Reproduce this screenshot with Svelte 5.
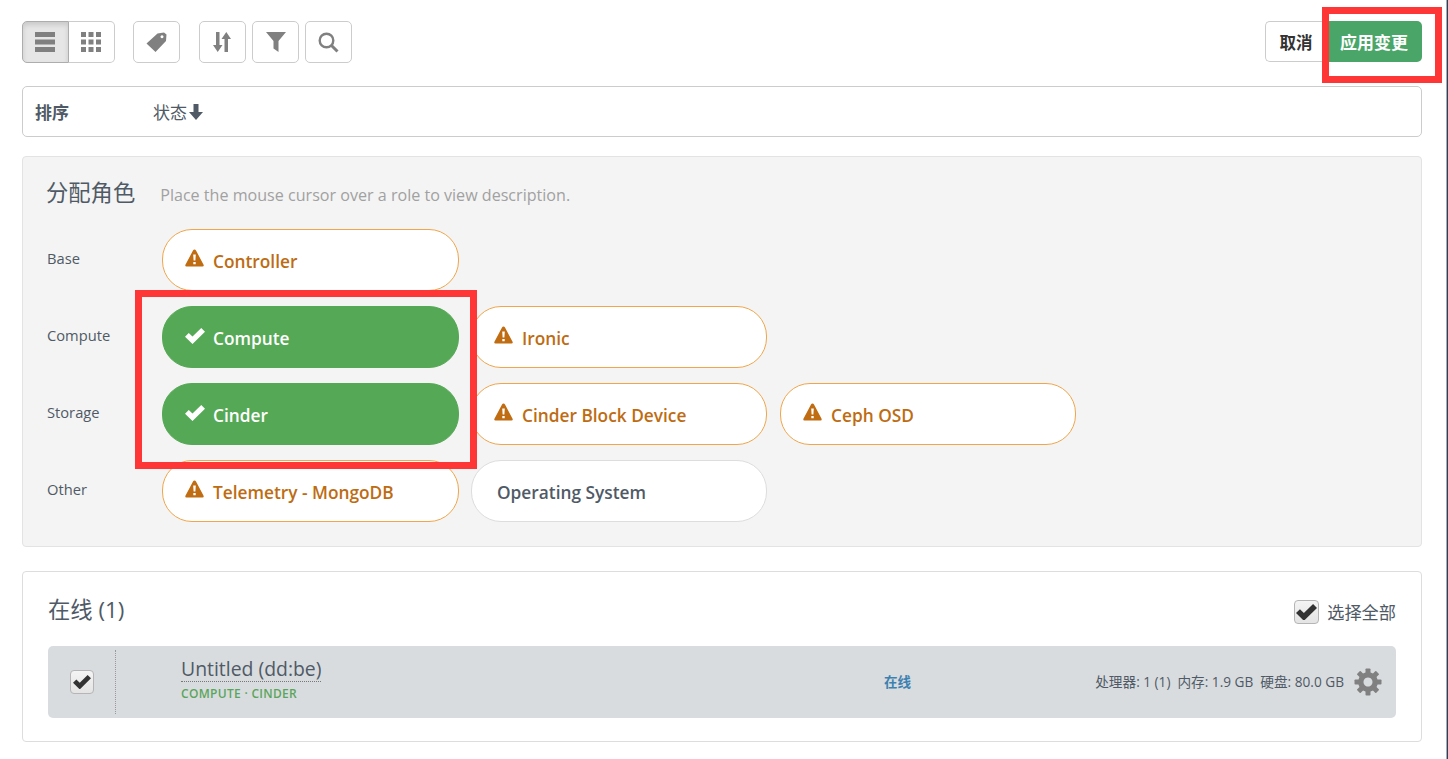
<script>
  const roleRows = [
    { label: 'Base', roles: [{ name: 'Controller', state: 'warn' }] },
    { label: 'Compute', roles: [{ name: 'Compute', state: 'on' }, { name: 'Ironic', state: 'warn' }] },
    { label: 'Storage', roles: [{ name: 'Cinder', state: 'on' }, { name: 'Cinder Block Device', state: 'warn' }, { name: 'Ceph OSD', state: 'warn' }] },
    { label: 'Other', roles: [{ name: 'Telemetry - MongoDB', state: 'warn' }, { name: 'Operating System', state: 'plain' }] }
  ];
</script>

{#snippet check(width)}
  <svg {width} height={width * 0.8} viewBox="2 3.600 16 12.800"><path d="M2 10.500 L5 7.600 L8 10.400 L15 3.600 L18 6.600 L8 16.400 Z" fill="currentColor" /></svg>
{/snippet}

<div class="page">
  <header class="toolbar">
    <div class="tools">
      <div class="group">
        <button class="tool shifted active" aria-label="list">
          <svg width="20" height="20" viewBox="0 0 20 20"><path d="M0 0h20v5H0zM0 7.500h20v5H0zM0 15h20v5H0z" fill="#808080" /></svg>
        </button>
        <button class="tool shifted" aria-label="grid">
          <svg width="20" height="20" viewBox="0 0 20 20"><path d="M0 0h5v5H0zM7.500 0h5v5h-5zM15 0h5v5h-5zM0 7.500h5v5H0zM7.500 7.500h5v5h-5zM15 7.500h5v5h-5zM0 15h5v5H0zM7.500 15h5v5h-5zM15 15h5v5h-5z" fill="#808080" /></svg>
        </button>
      </div>
      <button class="tool solo tag" aria-label="labels">
        <svg width="21" height="21" viewBox="0 0 21 21"><path fill-rule="evenodd" d="M0.500 11.500 L11.500 1.500 L18 0.500 L20.500 2.500 L20 9 L9.500 20 Z M16 3.200 a1.500 1.500 0 1 0 0.010 0 Z" fill="#808080" /></svg>
      </button>
      <button class="tool shifted solo" aria-label="sort">
        <svg width="18" height="20" viewBox="0 0 18 20"><path d="M3 0h3.500v13H9.500L4.700 20 0 13h3zM11.500 20V7H8.500L13.300 0 18 7h-3v13z" fill="#808080" /></svg>
      </button>
      <button class="tool solo" aria-label="filter">
        <svg width="20" height="20" viewBox="0 0 20 20"><path d="M0 0h20L12.500 9v11l-5-3.500V9z" fill="#808080" /></svg>
      </button>
      <button class="tool solo" aria-label="search">
        <svg width="21" height="21" viewBox="0 0 21 21"><circle cx="8.500" cy="8.500" r="6.800" fill="none" stroke="#808080" stroke-width="2.400" /><path d="M13.500 13.500 L19.500 19.500" stroke="#808080" stroke-width="3" /></svg>
      </button>
    </div>
    <div class="actions">
      <button class="cancel">取消</button>
      <button class="apply">应用变更</button>
    </div>
  </header>

  <section class="sorter">
    <strong>排序</strong>
    <span class="sort-item">状态<svg width="14" height="16" viewBox="0 0 14 16"><path d="M4.500 0h5v8H14L7 16 0 8h4.500z" fill="#4f5a66" /></svg></span>
  </section>

  <section class="roles">
    <div class="roles-head">
      <h3>分配角色</h3>
      <span>Place the mouse cursor over a role to view description.</span>
    </div>
    {#each roleRows as row}
      <div class="role-row">
        <div class="role-label">{row.label}</div>
        <div class="pills">
          {#each row.roles as role}
            <div class="pill {role.state}">
              {#if role.state === 'warn'}
                <svg class="icon" width="19" height="18" viewBox="0 0 19 18"><path fill-rule="evenodd" d="M9.500 0.500 Q10.500 0.500 11 1.500 L18.700 16 Q19 17.500 17.500 17.500 H1.500 Q0 17.500 0.300 16 L8 1.500 Q8.500 0.500 9.500 0.500 Z M8.200 5.500 L8.600 11.500 H10.400 L10.800 5.500 Z M8.300 13 V15.300 H10.700 V13 Z" fill="#bf6c12" /></svg>
              {:else if role.state === 'on'}
                <span class="icon">{@render check(20)}</span>
              {/if}
              <span>{role.name}</span>
            </div>
          {/each}
        </div>
      </div>
    {/each}
  </section>

  <section class="online">
    <div class="online-head">
      <h3>在线 (1)</h3>
      <div class="select-all">
        <span class="box">{@render check(21)}</span>
        <span class="select-text">选择全部</span>
      </div>
    </div>
    <div class="node">
      <div class="node-check"><span class="box small">{@render check(18)}</span></div>
      <div class="node-name">
        <div class="title">Untitled (dd:be)</div>
        <div class="tags">COMPUTE · CINDER</div>
      </div>
      <div class="status">在线</div>
      <div class="specs">
        <span>处理器: 1 (1)</span><span>内存: 1.9 GB</span><span>硬盘: 80.0 GB</span>
      </div>
      <svg class="gear" width="28" height="28" viewBox="0 0 28 28">
        <g fill="#808080">
          <path fill-rule="evenodd" d="M14 4.200a9.800 9.800 0 1 0 0.010 0Z M14 9.500a4.500 4.500 0 1 1 -0.010 0Z" />
          {#each [0, 45, 90, 135, 180, 225, 270, 315] as a}
            <rect x="11.500" y="0.500" width="5" height="5.500" rx="0.800" transform="rotate({a} 14 14)" />
          {/each}
        </g>
      </svg>
    </div>
  </section>

  <div class="mark mark-apply"></div>
  <div class="mark mark-roles"></div>
</div>

<style>
  :global(body) {
    margin: 0;
    background: #fff;
    overflow: hidden;
  }
  .page {
    position: relative;
    box-sizing: border-box;
    height: 759px;
    padding: 21px 26px 0 22px;
    font-family: "Open Sans", "Noto Sans CJK SC", sans-serif;
    color: #4f5a66;
    box-shadow: inset -1px 0 #2f4054, inset -2px 0 #a4adb6;
  }
  button {
    font-family: inherit;
    padding: 0;
    cursor: pointer;
  }
  .toolbar {
    display: flex;
    justify-content: space-between;
    height: 42px;
    margin-bottom: 23px;
  }
  .tools {
    display: flex;
  }
  .group {
    display: flex;
    margin-right: 18px;
  }
  .tool {
    box-sizing: border-box;
    display: flex;
    align-items: center;
    justify-content: center;
    width: 47px;
    height: 42px;
    background: #fff;
    border: 1px solid #ccc;
  }
  .tool.shifted {
    padding-right: 2px;
  }
  .group .tool:first-child {
    border-radius: 5px 0 0 5px;
    width: 47px;
  }
  .group .tool:last-child {
    border-radius: 0 5px 5px 0;
    border-left: 0;
    width: 46px;
  }
  .tool.active {
    background: #e6e6e6;
    border-color: #adadad;
    box-shadow: inset 0 3px 5px rgba(0, 0, 0, 0.125);
  }
  .solo {
    border-radius: 5px;
    margin-right: 6px;
  }
  .tag {
    margin-right: 19px;
  }
  .actions {
    display: flex;
  }
  .cancel {
    box-sizing: border-box;
    width: 61px;
    height: 41px;
    background: #fff;
    border: 1px solid #ccc;
    border-right: 0;
    border-radius: 5px 0 0 5px;
    font-size: 16.500px;
    font-weight: 700;
    color: #333;
  }
  .apply {
    width: 96px;
    height: 41px;
    background: #4aa568;
    border: 0;
    border-radius: 0 5px 5px 0;
    color: #fff;
    font-size: 17px;
    font-weight: 700;
  }
  .sorter {
    box-sizing: border-box;
    height: 51px;
    display: flex;
    align-items: center;
    padding: 0 12px;
    margin-bottom: 19px;
    background: #fff;
    border: 1px solid #ccc;
    border-radius: 5px;
    font-size: 17px;
  }
  .sorter strong {
    width: 118px;
    font-weight: 700;
  }
  .sort-item {
    display: flex;
    align-items: center;
    gap: 2px;
  }
  .roles {
    box-sizing: border-box;
    height: 391px;
    padding: 20px 23px 0;
    margin-bottom: 24px;
    background: #f4f4f4;
    border: 1px solid #e3e3e3;
    border-radius: 4px;
  }
  .roles-head {
    display: flex;
    align-items: center;
    height: 36px;
    margin-bottom: 16px;
  }
  .roles-head h3 {
    margin: 0 25px 8px 0;
    font-size: 22.300px;
    font-weight: 400;
  }
  .roles-head span {
    font-size: 16.100px;
    color: #a1a1a1;
  }
  .role-row {
    display: flex;
    height: 77px;
  }
  .role-label {
    box-sizing: border-box;
    width: 116px;
    padding: 19px 0 0 1px;
    font-size: 14.700px;
    line-height: 20px;
  }
  .pills {
    display: flex;
    gap: 12px;
  }
  .pill {
    box-sizing: border-box;
    display: flex;
    align-items: center;
    gap: 9px;
    width: 297px;
    height: 62px;
    padding: 3px 0 0 22px;
    background: #fff;
    border: 1px solid #ddd;
    border-radius: 30px;
    font-size: 17.300px;
    font-weight: 600;
  }
  .pills .pill:not(:first-child) {
    width: 296px;
  }
  .pills .pill:nth-child(3) {
    margin-left: 1px;
  }
  .pill.warn {
    border-color: #f0a64a;
    color: #bd6c12;
  }
  .pill.warn .icon {
    margin-top: -7px;
  }
  .pill.on {
    gap: 8px;
    background: #55a855;
    border-color: #55a855;
    color: #fff;
  }
  .pill.plain {
    padding-left: 25px;
  }
  .icon {
    display: flex;
    margin-top: -5px;
    flex: none;
  }
  .online {
    box-sizing: border-box;
    height: 171px;
    padding: 0 25px;
    background: #fff;
    border: 1px solid #ddd;
    border-radius: 4px;
  }
  .online-head {
    display: flex;
    justify-content: space-between;
    align-items: center;
    height: 74px;
  }
  .online-head h3 {
    margin: 0 0 2px;
    font-size: 22.300px;
    font-weight: 400;
  }
  .select-all {
    display: flex;
    align-items: center;
    gap: 8px;
    padding-top: 6px;
    font-size: 17.200px;
  }
  .select-text {
    margin-bottom: 2px;
  }
  .box {
    box-sizing: border-box;
    display: flex;
    align-items: center;
    justify-content: center;
    width: 25px;
    height: 24px;
    color: #333;
    background: linear-gradient(#f4f4f4, #e4e4e4);
    border: 1px solid #b5b5b5;
    border-radius: 4px;
  }
  .box.small {
    width: 24px;
    height: 24px;
  }
  .node {
    display: flex;
    align-items: center;
    height: 72px;
    background: #d9dcdf;
    border-radius: 5px;
  }
  .node-check {
    box-sizing: border-box;
    display: flex;
    align-items: center;
    justify-content: center;
    flex: none;
    width: 68px;
    height: 64px;
    padding-left: 1px;
    border-right: 1px dotted #999;
  }
  .node-name {
    box-sizing: border-box;
    flex: none;
    width: 768px;
    padding-left: 65px;
    margin-top: -2px;
  }
  .title {
    display: inline-block;
    font-size: 19.400px;
    line-height: 18px;
    padding-bottom: 3px;
    border-bottom: 1px dotted #777;
    vertical-align: top;
  }
  .tags {
    font-size: 12px;
    font-weight: 600;
    line-height: 16px;
    margin-top: 4px;
    color: #5ba55b;
    letter-spacing: 0.300px;
  }
  .status {
    flex: none;
    margin-top: -2px;
    font-size: 13.500px;
    font-weight: 700;
    color: #3c81b0;
  }
  .specs {
    display: flex;
    gap: 7px;
    margin-left: auto;
    margin-top: -2px;
    font-size: 13.650px;
    white-space: nowrap;
  }
  .gear {
    margin-left: 10px;
    margin-right: 14px;
    flex: none;
  }
  .mark {
    position: absolute;
    box-sizing: border-box;
    border: 7px solid #ff3636;
    pointer-events: none;
  }
  .mark-apply {
    left: 1322px;
    top: 7px;
    width: 120px;
    height: 76px;
  }
  .mark-roles {
    left: 135px;
    top: 290px;
    width: 342px;
    height: 179px;
  }
</style>
